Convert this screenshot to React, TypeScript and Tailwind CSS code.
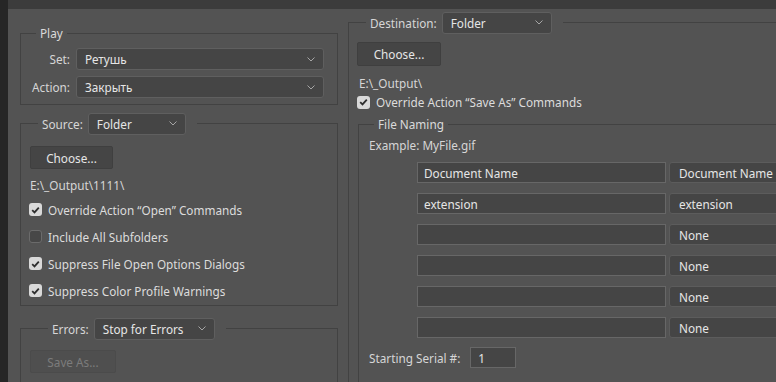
import type { ReactNode } from "react";

const Chevron = () => (
  <svg width="8" height="5" viewBox="0 0 8 5" className="shrink-0">
    <path d="M0.5 0.5 L4 4 L7.5 0.5" fill="none" stroke="#a6a6a6" strokeWidth="1" />
  </svg>
);

const Select = ({ value, className = "" }: { value: string; className?: string }) => (
  <div
    className={`h-[22px] shrink-0 flex items-center justify-between rounded-[3px] border border-[#5f5f5f] bg-[#454545] pl-[8px] pr-[8px] text-[#e6e6e6] ${className}`}
  >
    <span>{value}</span>
    <Chevron />
  </div>
);

const Button = ({ children, disabled = false, className = "" }: { children: ReactNode; disabled?: boolean; className?: string }) => (
  <button
    type="button"
    className={`h-[23px] flex items-center justify-center rounded-[2px] border ${
      disabled
        ? "border-[#4b4b4b] bg-[#4f4f4f] text-[#7c7c7c]"
        : "border-[#3f3f3f] bg-[#454545] text-[#e6e6e6]"
    } ${className}`}
  >
    {children}
  </button>
);

const Checkbox = ({ checked }: { checked: boolean }) =>
  checked ? (
    <span className="w-[13px] h-[13px] shrink-0 rounded-[3px] bg-[#d9d9d9] flex items-center justify-center">
      <svg width="9" height="8" viewBox="0 0 9 8">
        <path d="M1.2 4.2 L3.5 6.4 L7.8 1.6" fill="none" stroke="#2e2e2e" strokeWidth="1.8" />
      </svg>
    </span>
  ) : (
    <span className="w-[13px] h-[13px] shrink-0 rounded-[3px] border border-[#6b6b6b] bg-[#474747]" />
  );

const CheckRow = ({ checked, label }: { checked: boolean; label: string }) => (
  <div className="h-[27px] flex items-center gap-[6px] text-[#dcdcdc]">
    <Checkbox checked={checked} />
    <span>{label}</span>
  </div>
);

const TextBox = ({ value = "", className = "" }: { value?: string; className?: string }) => (
  <div
    className={`h-[21px] flex items-center border border-[#676767] bg-[#454545] pl-[6px] text-[#e6e6e6] ${className}`}
  >
    {value}
  </div>
);

const namingRows = [
  { text: "Document Name", pick: "Document Name" },
  { text: "extension", pick: "extension" },
  { text: "", pick: "None" },
  { text: "", pick: "None" },
  { text: "", pick: "None" },
  { text: "", pick: "None" },
];

export default function App() {
  return (
    <div
      className="w-[776px] h-[382px] overflow-hidden flex bg-[#535353] text-[11.75px] leading-[16px] text-[#d6d6d6]"
      style={{ fontFamily: '"Noto Sans", "Open Sans", sans-serif' }}
    >
      <div className="w-[8px] shrink-0 bg-[#262626]" />
      <div className="flex-1 flex flex-col min-w-0">
        <div className="h-[9px] shrink-0 bg-[#3c3c3c]" />
        <div className="flex flex-1 min-h-0">
          {/* left column */}
          <div className="w-[340px] shrink-0 pl-[12px]">
            <fieldset className="mt-[16px] w-[318px] border border-[#424242] pt-[7px] pb-[6px] pr-[13px]">
              <legend className="ml-[15px] px-[4px] leading-[16px] text-[#dadada]">Play</legend>
              <div className="grid grid-cols-[49px_1fr] gap-x-[6px] gap-y-[6px] items-center">
                <span className="text-right">Set:</span>
                <Select value="Ретушь" />
                <span className="text-right">Action:</span>
                <Select value="Закрыть" />
              </div>
            </fieldset>

            <fieldset className="mt-[7px] w-[318px] border border-[#424242] pt-[11px] pb-[1px] pl-[9px]">
              <legend className="ml-[8px] px-[4px] h-[23px]">
                <div className="h-[23px] flex items-center gap-[5px]">
                  <span>Source:</span>
                  <Select value="Folder" className="w-[98px]" />
                  <span className="w-[2px]" />
                </div>
              </legend>
              <Button className="w-[83px]">Choose...</Button>
              <div className="mt-[8px]">E:\_Output\1111\</div>
              <div className="mt-[3px] -ml-[1px]">
                <CheckRow checked label="Override Action “Open” Commands" />
                <CheckRow checked={false} label="Include All Subfolders" />
                <CheckRow checked label="Suppress File Open Options Dialogs" />
                <CheckRow checked label="Suppress Color Profile Warnings" />
              </div>
            </fieldset>

            <fieldset className="mt-[11px] w-[318px] border border-[#424242] pt-[10px] pb-[20px] pl-[9px]">
              <legend className="ml-[18px] px-[4px] h-[23px]">
                <div className="h-[23px] flex items-center gap-[5px]">
                  <span>Errors:</span>
                  <Select value="Stop for Errors" className="w-[121px]" />
                  <span className="w-[2px]" />
                </div>
              </legend>
              <Button disabled className="w-[86px]">Save As...</Button>
            </fieldset>
          </div>

          {/* right column */}
          <div className="flex-1 min-w-0">
            <fieldset className="mt-[2px] w-[520px] border border-[#424242] pt-[8px] pb-[20px] pl-[8px]">
              <legend className="ml-[9px] px-[4px] h-[23px]">
                <div className="h-[23px] flex items-center gap-[5px]">
                  <span>Destination:</span>
                  <Select value="Folder" className="w-[110px]" />
                  <span className="w-[2px]" />
                </div>
              </legend>
              <Button className="w-[84px] h-[24px]">Choose...</Button>
              <div className="mt-[9px] ml-[2px]">E:\_Output\</div>
              <div className="mt-[1px] h-[20px] flex items-center gap-[6px] text-[#dcdcdc]">
                <Checkbox checked />
                <span>Override Action “Save As” Commands</span>
              </div>

              <fieldset className="mt-[4px] ml-[1px] w-[480px] border border-[#424242] pt-[5px] pb-[20px] pl-[10px]">
                <legend className="ml-[5px] px-[4px] leading-[16px] text-[#dadada]">File Naming</legend>
                <div>Example: MyFile.gif</div>
                <div className="mt-[9px] ml-[48px] flex flex-col gap-[10px]">
                  {namingRows.map((row, i) => (
                    <div key={i} className="flex gap-[3px]">
                      <TextBox value={row.text} className="w-[249px]" />
                      <div className="h-[21px] w-[150px] flex items-center rounded-[3px] border border-[#5c5c5c] bg-[#454545] pl-[9px] text-[#e6e6e6]">
                        {row.pick}
                      </div>
                    </div>
                  ))}
                </div>
                <div className="mt-[9px] flex items-center gap-[10px]">
                  <span>Starting Serial #:</span>
                  <TextBox value="1" className="w-[46px] pl-[7px]" />
                </div>
              </fieldset>
            </fieldset>
          </div>
        </div>
      </div>
    </div>
  );
}
